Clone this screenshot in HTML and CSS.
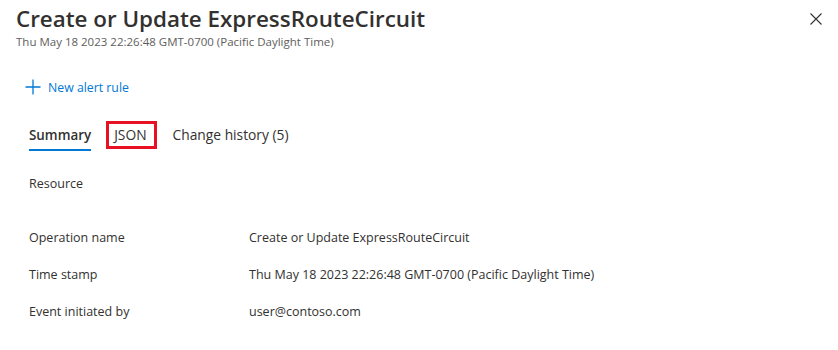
FILE: index.html
```html
<!DOCTYPE html>
<html>
<head>
<meta charset="utf-8">
<link rel="stylesheet" href="styles.css">
</head>
<body>
<div class="panel">
  <header class="head">
    <div class="titles">
      <h1 class="title">Create or Update ExpressRouteCircuit</h1>
      <div class="subtitle">Thu May 18 2023 22:26:48 GMT-0700 (Pacific Daylight Time)</div>
    </div>
    <button class="close" aria-label="Close">
      <svg width="12" height="12" viewBox="0 0 12 12"><path d="M0.5 0.5L11.5 11.5M11.5 0.5L0.5 11.5" stroke="#323130" stroke-width="1.1" fill="none"/></svg>
    </button>
  </header>
  <div class="body">
    <a class="cmd">
      <svg class="plus" width="16" height="16" viewBox="0 0 16 16"><path d="M8 0.5V15.5M0.5 8H15.5" stroke="#0078d4" stroke-width="1.3" fill="none"/></svg>
      <span>New alert rule</span>
    </a>
    <nav class="tabs">
      <span class="tab active">Summary</span>
      <span class="tab boxed">JSON</span>
      <span class="tab">Change history (5)</span>
    </nav>
    <div class="section">Resource</div>
    <dl class="props">
      <dt>Operation name</dt><dd>Create or Update ExpressRouteCircuit</dd>
      <dt>Time stamp</dt><dd>Thu May 18 2023 22:26:48 GMT-0700 (Pacific Daylight Time)</dd>
      <dt>Event initiated by</dt><dd>user@contoso.com</dd>
    </dl>
  </div>
</div>
</body>
</html>
```

FILE: styles.css
```css
html, body {
  margin: 0;
  background: #ffffff;
}
body {
  font-family: "Open Sans", "Noto Sans", sans-serif;
  color: #323130;
}
.panel {
  width: 838px;
  height: 350px;
  box-sizing: border-box;
}
.head {
  display: flex;
  justify-content: space-between;
  align-items: flex-start;
  padding: 4px 16px 0 16px;
}
.title {
  margin: 0;
  font-size: 22.4px;
  font-weight: 600;
  line-height: 30px;
  color: #323130;
}
.subtitle {
  font-size: 11.5px;
  line-height: 16px;
  color: #605e5c;
}
.close {
  border: 0;
  background: transparent;
  padding: 0;
  margin: 9px 0 0 0;
  width: 12px;
  height: 12px;
  display: flex;
}
.body {
  padding: 0 0 0 26px;
}
.cmd {
  display: flex;
  align-items: center;
  gap: 7px;
  margin: 27px 0 0 -1px;
  height: 20px;
  color: #0078d4;
  font-size: 12.3px;
}
.tabs {
  display: flex;
  margin-top: 22px;
  height: 32px;
  align-items: center;
}
.tab {
  font-size: 13.8px;
  line-height: 20px;
  padding: 3px 3px;
  margin-right: 12px;
  position: relative;
}
.tab.active {
  font-weight: 600;
  font-size: 13.4px;
}
.tab.active::after {
  content: "";
  position: absolute;
  left: 3px;
  right: 3px;
  bottom: -3px;
  height: 2px;
  background: #0078d4;
}
.tab.boxed {
  border: 3px solid #e81123;
  padding: 1px 7px 1px 5px;
  margin-right: 13px;
}
.section {
  margin-top: 23px;
  padding-left: 3px;
  font-size: 12.5px;
  line-height: 20px;
}
.props {
  display: grid;
  grid-template-columns: 220px 1fr;
  row-gap: 17px;
  margin: 34px 0 0 0;
  padding-left: 3px;
  font-size: 12.5px;
  line-height: 20px;
}
.props dt, .props dd {
  margin: 0;
}
```
